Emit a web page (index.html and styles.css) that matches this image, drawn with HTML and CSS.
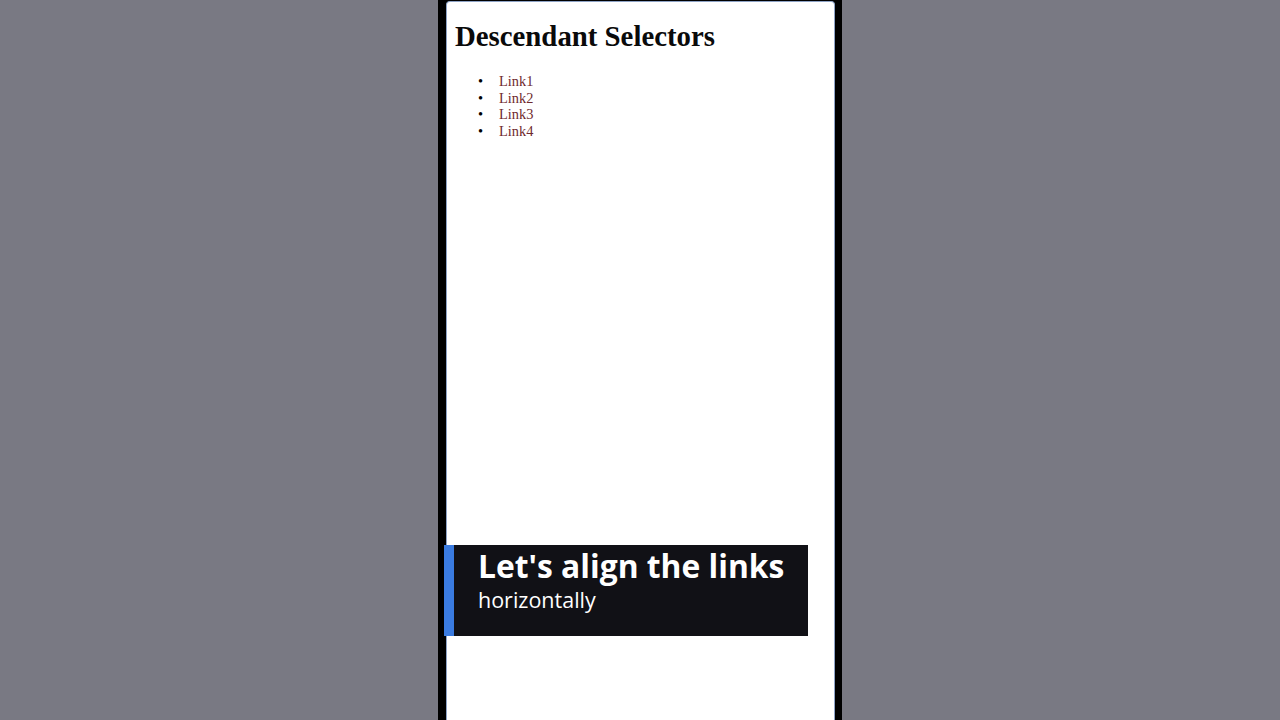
FILE: index.html
```html
<!DOCTYPE html>
<html>
<head>
<meta charset="utf-8">
<link rel="stylesheet" href="styles.css">
</head>
<body>
<div class="stage">
  <div class="phone">
    <div class="screen">
      <h1 class="title">Descendant Selectors</h1>
      <ul class="links">
        <li class="item"><a class="link">Link1</a></li>
        <li class="item"><a class="link">Link2</a></li>
        <li class="item"><a class="link">Link3</a></li>
        <li class="item"><a class="link">Link4</a></li>
      </ul>
    </div>
    <div class="caption">
      <div class="caption-main">Let's align the links</div>
      <div class="caption-sub">horizontally</div>
    </div>
  </div>
</div>
</body>
</html>
```
FILE: styles.css
```css
html, body {
  margin: 0;
  padding: 0;
}
body {
  background: #797983;
  width: 1280px;
  height: 720px;
  overflow: hidden;
}
.stage {
  display: flex;
  justify-content: center;
  height: 720px;
}
.phone {
  position: relative;
  width: 404px;
  height: 720px;
  background: #000;
  padding: 1px 7px 0 8px;
  box-sizing: border-box;
}
.screen {
  background: #fff;
  border: 1px solid #8ea3c6;
  border-bottom: none;
  border-radius: 4px 4px 0 0;
  height: 719px;
  box-sizing: border-box;
  padding: 0 8px;
}
.title {
  font-family: "Liberation Serif", "Times New Roman", serif;
  font-weight: bold;
  font-size: 28.8px;
  margin: 0;
  padding-top: 17px;
  line-height: 34px;
  color: #0a0a0a;
}
.links {
  list-style: none;
  margin: 20px 0 0 0;
  padding-left: 23px;
  font-family: "Liberation Serif", "Times New Roman", serif;
  font-size: 14.4px;
  line-height: 16.7px;
}
.item::before {
  content: "\2022";
  display: inline-block;
  width: 21px;
  color: #000;
}
.link {
  color: #6f2a2e;
}
.caption {
  position: absolute;
  left: 6px;
  top: 545px;
  width: 364px;
  height: 91px;
  background: #111116;
  border-left: 10px solid #3a7be0;
  box-sizing: border-box;
  padding: 0 0 0 24px;
  color: #fff;
  font-family: "Open Sans", "Noto Sans", sans-serif;
}
.caption-main {
  font-weight: bold;
  font-size: 31.8px;
  line-height: 42px;
}
.caption-sub {
  font-size: 21.5px;
  line-height: 26px;
}
```
